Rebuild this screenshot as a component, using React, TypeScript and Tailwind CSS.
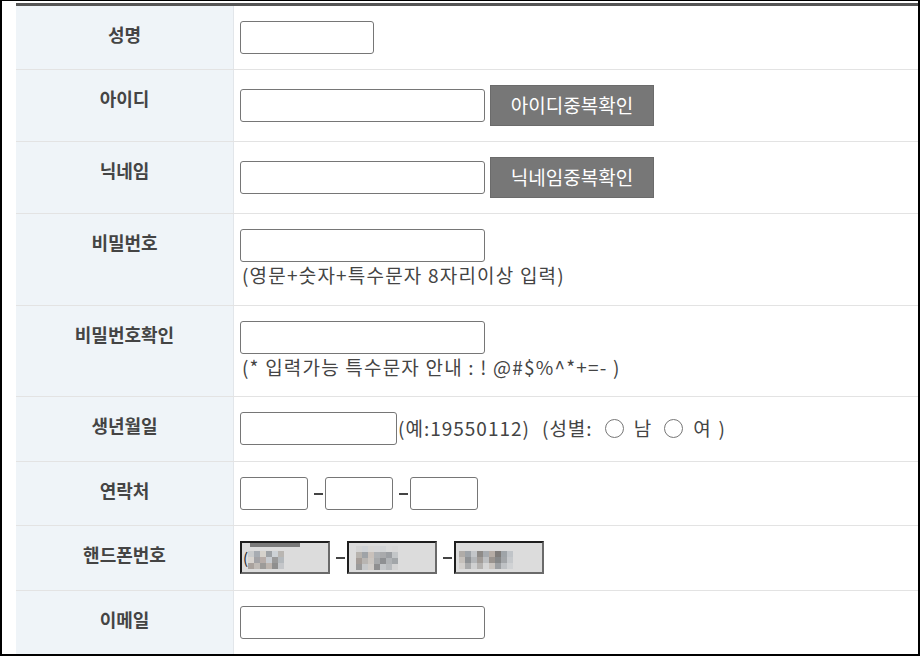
import React from 'react';

const FONT = { fontFamily: "'Noto Sans CJK KR', 'Noto Sans', sans-serif" };

const inputCls = 'h-[33px] rounded-[3px] border border-[#767676] bg-white';

function Dash() {
  return (
    <span className="flex w-[17px] items-center">
      <span className="ml-[6px] h-[2px] w-[9px] bg-[#444]" />
    </span>
  );
}

// blurred (mosaic) digits inside the phone number boxes
function Mosaic({ colors, cols }: { colors: string[]; cols: number }) {
  return (
    <div className="grid" style={{ gridTemplateColumns: `repeat(${cols}, 6px)` }}>
      {colors.map((c, i) => (
        <span key={i} className="h-[6px] w-[6px]" style={{ backgroundColor: c }} />
      ))}
    </div>
  );
}

const m1 = ['#c9cbcc', '#a7acb2', '#d6d2cc', '#9ea2a6', '#cdd2d6', '#b9b6b2',
  '#d8d4cf', '#a3a3a6', '#b7ada9', '#c7cbd0', '#9a9a9a', '#b4b9bd',
  '#a9a29d', '#c0bbb6', '#9d9b99', '#bdb5af', '#8f8f8f', '#c4c6c9'];
const m2 = ['#d4d4d4', '#cfd2d6', '#d8d6d4', '#d6d6d8', '#d2d4d6', '#dadada', '#d8d8d8',
  '#b7b3ae', '#9fa3a7', '#c9c1bb', '#aeb1b4', '#a9aaac', '#9c9fa3', '#c3c6c8',
  '#a59d98', '#b8b5b2', '#cac5c0', '#a7a9ab', '#8e9093', '#b0b3b6', '#a2a6a9',
  '#9b9b9b', '#c6c8ca', '#d0ccc8', '#8f8f90', '#c3c6c9', '#b7babd', '#d3d3d3'];
const m3 = ['#b0aca8', '#9ea3a8', '#c3c6c9', '#8e8b88', '#a7abaf', '#b5aca5', '#7f7c7a', '#9fa4a8', '#c0c4c8',
  '#c5c0bb', '#8f9295', '#b3b6b9', '#a19c98', '#bdbfc1', '#9a948f', '#868889', '#a3a6a9', '#c6c9cc',
  '#d2cfcc', '#a9aaab', '#cfd0d1', '#b5b3b1', '#d6d6d6', '#c9c4bf', '#9c9fa2', '#bfc2c5', '#d0d2d4'];

function PhoneBox({ children }: { children: React.ReactNode }) {
  return (
    <div className="relative flex h-[33px] w-[90px] items-center border-2 border-t-[#1e1e1e] border-l-[#1e1e1e] border-b-[#6a6a6a] border-r-[#6a6a6a] bg-[#dcdcdc] pl-[1px]">
      {children}
    </div>
  );
}

function Radio() {
  return <span className="inline-block h-[19px] w-[19px] rounded-full border border-[#767676] bg-white" />;
}

const hint = 'pl-[2px] text-[19px] leading-[26px] tracking-[1.2px] text-[#444]';
const btn = 'h-[41px] w-[164px] border border-[#6b6b6b] bg-[#777777] text-[19px] text-white';

const rows: { label: string; h: string; body: React.ReactNode }[] = [
  { label: '성명', h: 'h-[64px]', body: <div className={`${inputCls} w-[134px]`} /> },
  {
    label: '아이디',
    h: 'h-[72px]',
    body: (
      <div className="flex items-center gap-[5px]">
        <div className={`${inputCls} w-[245px]`} />
        <button className={btn}>아이디중복확인</button>
      </div>
    ),
  },
  {
    label: '닉네임',
    h: 'h-[72px]',
    body: (
      <div className="flex items-center gap-[5px]">
        <div className={`${inputCls} w-[245px]`} />
        <button className={btn}>닉네임중복확인</button>
      </div>
    ),
  },
  {
    label: '비밀번호',
    h: 'h-[92px]',
    body: (
      <div>
        <div className={`${inputCls} w-[245px]`} />
        <p className={hint}>(영문+숫자+특수문자 8자리이상 입력)</p>
      </div>
    ),
  },
  {
    label: '비밀번호확인',
    h: 'h-[91px]',
    body: (
      <div>
        <div className={`${inputCls} w-[245px]`} />
        <p className={hint}>(* 입력가능 특수문자 안내 : ! @#$%^*+=- )</p>
      </div>
    ),
  },
  {
    label: '생년월일',
    h: 'h-[65px]',
    body: (
      <div className="flex items-center text-[19px] tracking-[1px] text-[#444]">
        <div className={`${inputCls} w-[157px]`} />
        <span className="ml-[1px]">(예:19550112)</span>
        <span className="ml-[12px]">(성별:</span>
        <span className="ml-[12px] flex items-center"><Radio /></span>
        <span className="ml-[10px]">남</span>
        <span className="ml-[12px] flex items-center"><Radio /></span>
        <span className="ml-[10px]">여</span>
        <span className="ml-[7px]">)</span>
      </div>
    ),
  },
  {
    label: '연락처',
    h: 'h-[64px]',
    body: (
      <div className="flex">
        <div className={`${inputCls} w-[68px]`} />
        <Dash />
        <div className={`${inputCls} w-[68px]`} />
        <Dash />
        <div className={`${inputCls} w-[68px]`} />
      </div>
    ),
  },
  {
    label: '핸드폰번호',
    h: 'h-[65px]',
    body: (
      <div className="flex">
        <PhoneBox>
          <span className="absolute left-[8px] top-0 h-[4px] w-[50px] bg-[#7a7a7a]" />
          <span className="text-[15px] leading-none text-[#222]">(</span>
          <div className="mt-[4px]"><Mosaic colors={m1} cols={6} /></div>
        </PhoneBox>
        <Dash />
        <PhoneBox>
          <div className="ml-[6px]"><Mosaic colors={m2} cols={7} /></div>
        </PhoneBox>
        <Dash />
        <PhoneBox>
          <div className="ml-[2px] mt-[4px]"><Mosaic colors={m3} cols={9} /></div>
        </PhoneBox>
      </div>
    ),
  },
  { label: '이메일', h: 'h-[63px]', body: <div className={`${inputCls} w-[245px]`} /> },
];

export default function App() {
  return (
    <div className="h-[656px] w-[921px] bg-white" style={FONT}>
      <div className="h-[656px] w-[920px] border-x-2 border-t border-b-2 border-black pl-[14px] pt-[2px]">
        <div className="border-t-[3px] border-[#555555]">
          {rows.map((r, i) => (
            <div
              key={r.label}
              className={`flex ${r.h} ${i < rows.length - 1 ? 'border-b border-[#e3e3e3]' : ''}`}
            >
              <div className="w-[218px] shrink-0 border-r border-[#e2e6ea] bg-[#eff4f8] pt-[15px] text-center text-[18px] font-bold leading-[26px] text-[#444]">
                {r.label}
              </div>
              <div className="flex-1 pl-[6px] pt-[15px]">{r.body}</div>
            </div>
          ))}
        </div>
      </div>
    </div>
  );
}
